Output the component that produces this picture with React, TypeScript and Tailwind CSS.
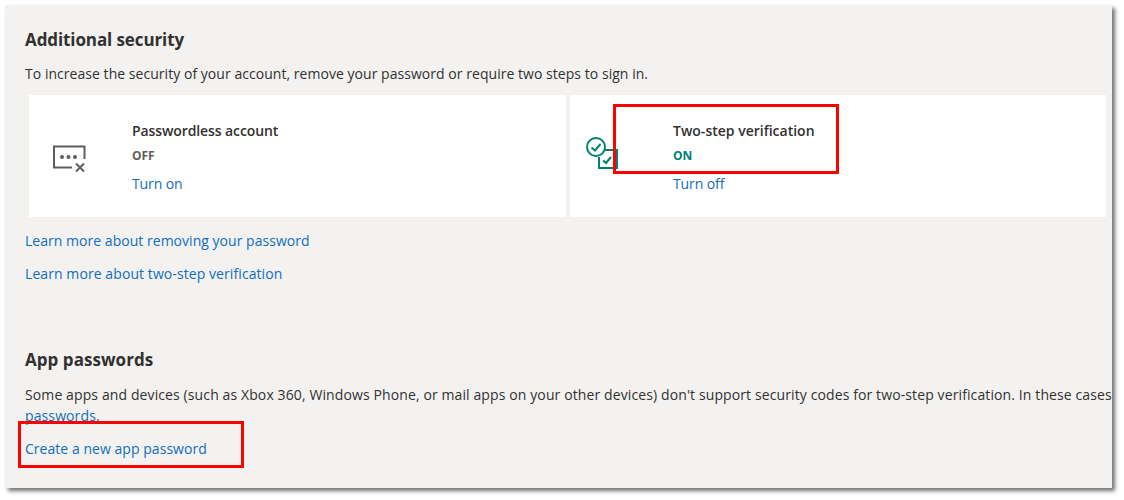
const linkClass = 'text-[#106ebe]';

function PasswordlessIcon() {
  return (
    <svg width="34" height="30" viewBox="0 0 34 30" fill="none" className="text-[#605e5c]">
      <path d="M20 23.5H2V2.5H32.5V15" stroke="currentColor" strokeWidth="2" />
      <circle cx="10" cy="13" r="2" fill="currentColor" />
      <circle cx="16.5" cy="13" r="2" fill="currentColor" />
      <circle cx="23" cy="13" r="2" fill="currentColor" />
      <path d="M24 19.5L32 27.5M32 19.5L24 27.5" stroke="currentColor" strokeWidth="2" />
    </svg>
  );
}

function TwoStepIcon() {
  return (
    <svg width="34" height="36" viewBox="0 0 34 36" fill="none" className="text-[#008272]">
      <circle cx="11" cy="11" r="9" stroke="currentColor" strokeWidth="2" />
      <path d="M6.5 11.5L10 14.5L15.5 8" stroke="currentColor" strokeWidth="2" />
      <path d="M20 14H32V32H14V21" stroke="currentColor" strokeWidth="2" />
      <path d="M18 24.5L21 27L26 21" stroke="currentColor" strokeWidth="2" />
    </svg>
  );
}

interface SecurityCardProps {
  icon: React.ReactNode;
  cardClass: string;
  iconClass: string;
  title: string;
  titleClass: string;
  status: string;
  statusClass: string;
  action: string;
}

function SecurityCard({ icon, cardClass, iconClass, title, titleClass, status, statusClass, action }: SecurityCardProps) {
  return (
    <div className={`flex h-[122px] bg-white ${cardClass}`}>
      <div className={`w-[103px] ${iconClass}`}>{icon}</div>
      <div className="flex flex-col pt-[26px]">
        <div className={`text-[14px] leading-5 font-semibold text-[#323130] ${titleClass}`}>{title}</div>
        <div className={`mt-[7px] text-[12px] leading-4 font-bold ${statusClass}`}>{status}</div>
        <a className={`mt-[10px] text-[14px] leading-5 ${linkClass}`}>{action}</a>
      </div>
    </div>
  );
}

export default function App() {
  return (
    <div className="h-[500px] w-[1124px] overflow-hidden bg-white pt-[5px] pl-[5px] font-['Open_Sans',sans-serif] tracking-[-0.1px]">
      <div className="relative h-[483px] w-[1107px] bg-[#f3f2f1] shadow-[3px_3px_4px_rgba(0,0,0,0.55)]">
        <div className="h-full overflow-hidden pt-[24px] pl-5">
          <h2 className="text-[17px] leading-[22px] font-bold text-[#323130]">Additional security</h2>
          <p className="mt-[13px] text-[14px] leading-5 tracking-[0.04px] text-[#323130]">
            To increase the security of your account, remove your password or require two steps to sign in.
          </p>
          <div className="mt-[11px] ml-1 flex gap-1">
            <SecurityCard
              icon={<PasswordlessIcon />}
              cardClass="w-[537px]"
              iconClass="pt-[49px] pl-[23px]"
              title="Passwordless account"
              titleClass="tracking-[-0.1px]"
              status="OFF"
              statusClass="text-[#605e5c]"
              action="Turn on"
            />
            <SecurityCard
              icon={<TwoStepIcon />}
              cardClass="w-[536px]"
              iconClass="pt-[41px] pl-[15px]"
              title="Two-step verification"
              titleClass="tracking-[0px]"
              status="ON"
              statusClass="text-[#008272]"
              action="Turn off"
            />
          </div>
          <a className={`mt-[14px] block text-[14px] leading-5 tracking-[0.03px] ${linkClass}`}>
            Learn more about removing your password
          </a>
          <a className={`mt-[13px] block text-[14px] leading-5 tracking-[0.08px] ${linkClass}`}>
            Learn more about two-step verification
          </a>
          <h2 className="mt-[65px] text-[17px] leading-[22px] font-bold tracking-[0.05px] text-[#323130]">App passwords</h2>
          <p className="mt-[13px] text-[14px] leading-[21px] tracking-[0.11px] whitespace-nowrap text-[#323130]">
            Some apps and devices (such as Xbox 360, Windows Phone, or mail apps on your other devices) don't support security codes for two-step verification. In these cases
            <br />
            <a className={linkClass}>passwords.</a>
          </p>
          <a className={`mt-[13px] block text-[14px] leading-5 tracking-[0.04px] ${linkClass}`}>Create a new app password</a>
        </div>

        {/* Red annotation boxes */}
        <div className="absolute top-[99px] left-[608px] h-[70px] w-[226px] border-[3px] border-[#ff0000]" />
        <div className="absolute top-[416px] left-[13px] h-[47px] w-[226px] border-[3px] border-[#ff0000]" />
      </div>
    </div>
  );
}
